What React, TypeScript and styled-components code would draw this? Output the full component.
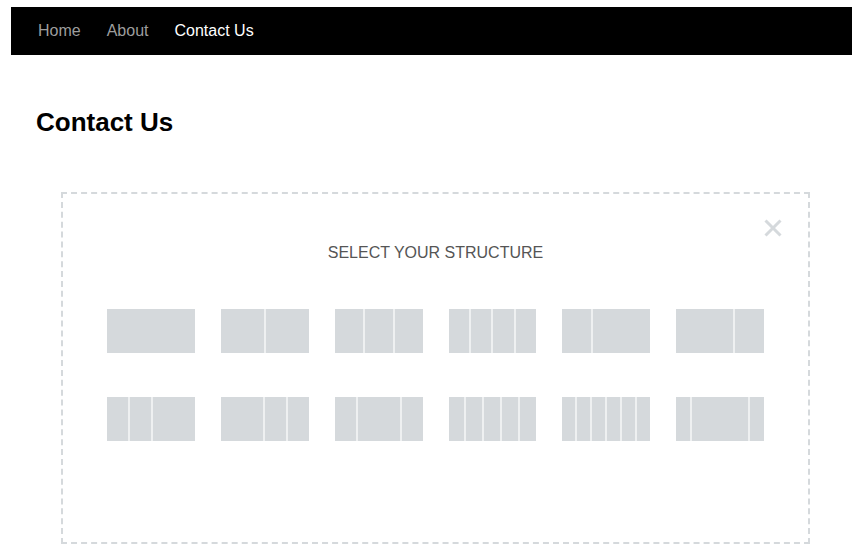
import React from 'react';
import styled, { createGlobalStyle } from 'styled-components';

const GlobalStyle = createGlobalStyle`
	html, body {
		margin: 0;
		padding: 0;
		background: #fff;
		font-family: 'Liberation Sans', Arial, sans-serif;
	}
`;

const NAV_LINKS = ['Home', 'About', 'Contact Us'];

// each layout is a list of column fractions
const STRUCTURES: number[][] = [
	[1],
	[1, 1],
	[1, 1, 1],
	[1, 1, 1, 1],
	[1, 2],
	[2, 1],
	[1, 1, 2],
	[2, 1, 1],
	[1, 2, 1],
	[1, 1, 1, 1, 1],
	[1, 1, 1, 1, 1, 1],
	[1, 4, 1],
];

const App = () => {
	return (
		<Page>
			<GlobalStyle />
			<NavBar>
				{NAV_LINKS.map((link) => (
					<NavLink key={link} active={link === 'Contact Us'}>
						{link}
					</NavLink>
				))}
			</NavBar>

			<Main>
				<Heading>Contact Us</Heading>

				<StructureBox>
					<CloseButton aria-label='close'>
						<svg width='18' height='18' viewBox='0 0 18 18'>
							<path
								d='M1.5 1.5 L16.5 16.5 M16.5 1.5 L1.5 16.5'
								stroke='currentColor'
								strokeWidth='3'
								fill='none'
							/>
						</svg>
					</CloseButton>
					<BoxTitle>Select your structure</BoxTitle>
					<StructureGrid>
						{STRUCTURES.map((cols, i) => (
							<Structure key={i}>
								{cols.map((flex, j) => (
									<Column key={j} grow={flex} />
								))}
							</Structure>
						))}
					</StructureGrid>
				</StructureBox>
			</Main>
		</Page>
	);
};

export default App;

const Page = styled.div`
	padding: 7px 0 0 11px;
`;

const NavBar = styled.nav`
	display: flex;
	align-items: center;
	height: 48px;
	padding-left: 14px;
	background: #000;
`;

const NavLink = styled.a<{ active?: boolean }>`
	padding: 0 13px;
	font-size: 16px;
	line-height: 18px;
	color: ${({ active }) => (active ? '#fff' : '#9d9d9d')};
	cursor: pointer;
`;

const Main = styled.main`
	padding: 0 17px 0 25px;
`;

const Heading = styled.h1`
	margin: 52px 0 0;
	font-size: 26px;
	line-height: 30px;
	font-weight: bold;
	color: #000;
`;

const StructureBox = styled.section`
	position: relative;
	margin: 55px 25px 0;
	padding: 50px 44px 101px;
	border: 2px dashed #d5d9dc;
	text-align: center;
`;

const CloseButton = styled.span`
	position: absolute;
	top: 25px;
	right: 26px;
	display: flex;
	color: #d5d9dc;
	cursor: pointer;
`;

const BoxTitle = styled.h2`
	margin: 0 0 47px;
	font-size: 16px;
	line-height: 18px;
	font-weight: normal;
	text-transform: uppercase;
	color: #555;
`;

const StructureGrid = styled.div`
	display: grid;
	grid-template-columns: repeat(6, 1fr);
	column-gap: 26px;
	row-gap: 44px;
`;

const Structure = styled.div`
	display: flex;
	gap: 2px;
	height: 44px;
	background: #eef0f1;
	cursor: pointer;
`;

const Column = styled.div<{ grow: number }>`
	flex: ${({ grow }) => grow} 1 0;
	background: #d5d9dc;
`;
